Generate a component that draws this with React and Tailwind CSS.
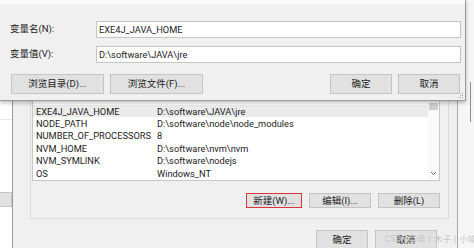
import React from "react";

const rows = [
  { name: "EXE4J_JAVA_HOME", value: "D:\\software\\JAVA\\jre" },
  { name: "NODE_PATH", value: "D:\\software\\node\\node_modules" },
  { name: "NUMBER_OF_PROCESSORS", value: "8" },
  { name: "NVM_HOME", value: "D:\\software\\nvm\\nvm" },
  { name: "NVM_SYMLINK", value: "D:\\software\\nodejs" },
  { name: "OS", value: "Windows_NT" },
];

const Btn = ({ children, className = "" }) => (
  <div
    className={
      "h-[15px] shrink-0 flex items-center justify-center bg-[#e1e1e1] border border-[#c4c4c4] text-[9.5px] leading-none " +
      className
    }
  >
    {children}
  </div>
);

const App = () => {
  return (
    <div className="relative w-[474px] h-[248px] overflow-hidden bg-white text-[#1b1b1b] font-['Roboto','Noto_Sans_CJK_SC',sans-serif]">
      <div className="flex h-full">
        {/* sliver of the window behind, on the left */}
        <div className="w-[13px] shrink-0 bg-white border-r border-[#9c9c9c] flex flex-col overflow-hidden">
          <div className="h-[120px] shrink-0 border-b border-[#e8e8e8]" />
          <Btn className="mt-[72px] -ml-[40px] w-[52px]">确定</Btn>
        </div>

        {/* environment variables window */}
        <div className="w-[445px] shrink-0 bg-[#f0f0f0] border-r border-[#a8a8a8] flex flex-col pl-[17px] pr-[20px]">
          <div className="w-[419px] h-[219px] shrink-0 border border-[#dadada] flex flex-col">
            <div className="ml-[1px] w-[408px] h-[180px] shrink-0 bg-white border border-[#c8c8c8] flex">
              <div className="flex-1 flex flex-col pt-[103px] text-[9.25px] leading-none">
                {rows.map((row, i) => (
                  <div
                    key={row.name}
                    className={"h-[12.4px] flex items-center pl-[3px] " + (i === 0 ? "bg-[#ebebeb]" : "")}
                  >
                    <span className="w-[121px] shrink-0">{row.name}</span>
                    <span>{row.value}</span>
                  </div>
                ))}
              </div>
              <div className="w-[11px] shrink-0 bg-[#fafafa] flex flex-col">
                <div className="mt-[101px] mx-[1px] h-[7px] bg-[#cdcdcd]" />
                <div className="flex-1" />
                <svg width="11" height="10" viewBox="0 0 11 10" className="mb-[2px]">
                  <polyline points="3,4 5.5,6.5 8,4" fill="none" stroke="#606060" strokeWidth="1" />
                </svg>
              </div>
            </div>
            <div className="mt-[12px] flex justify-end gap-[7px] pr-[8px]">
              <Btn className="w-[56px] !border-[#d8343c]">新建(W)...</Btn>
              <Btn className="w-[62px]">编辑(I)...</Btn>
              <Btn className="w-[62px]">删除(L)</Btn>
            </div>
          </div>
          <div className="mt-[11px] flex justify-end gap-[7px]">
            <Btn className="w-[52px] h-[20px]">确定</Btn>
            <Btn className="w-[62px] h-[20px]">取消</Btn>
          </div>
        </div>

        {/* sliver on the right */}
        <div className="flex-1 bg-[#f6f6f6] flex justify-end pr-[3px]">
          <div className="w-[1px] h-[40px] mt-[82px] bg-[#8c8c8c]" />
        </div>
      </div>

      {/* edit dialog on top */}
      <div className="absolute left-0 top-0 w-[466px] h-[101px] bg-[#f0f0f0] border-r border-b border-[#9a9a9a] shadow-[0_2px_4px_rgba(0,0,0,0.25)] flex flex-col">
        <div className="h-[4px] shrink-0 bg-[#fbfbfb]" />
        <div className="mt-[17px] flex items-center pl-[10px] pr-[4px]">
          <span className="w-[86px] shrink-0 text-[9.5px]">变量名(N):</span>
          <div className="flex-1 h-[17px] bg-white border border-[#c4c4c4] flex items-center pl-[2px] text-[9.25px]">
            EXE4J_JAVA_HOME
          </div>
        </div>
        <div className="mt-[8px] flex items-center pl-[10px] pr-[4px]">
          <span className="w-[86px] shrink-0 text-[9.5px]">变量值(V):</span>
          <div className="flex-1 h-[17px] bg-white border border-[#c4c4c4] flex items-center pl-[2px] text-[9.25px]">
            D:\software\JAVA\jre
          </div>
        </div>
        <div className="mt-[11px] flex pl-[11px] pr-[5px] gap-[6px]">
          <Btn className="w-[93px] h-[20px]">浏览目录(D)...</Btn>
          <Btn className="w-[93px] h-[20px]">浏览文件(F)...</Btn>
          <div className="flex-1" />
          <Btn className="w-[62px] h-[20px]">确定</Btn>
          <Btn className="w-[62px] h-[20px]">取消</Btn>
        </div>
        <svg width="6" height="6" viewBox="0 0 6 6" className="absolute right-[1px] bottom-[1px]">
          <rect x="4" y="0" width="1" height="1" fill="#a0a0a0" />
          <rect x="2" y="2" width="1" height="1" fill="#a0a0a0" />
          <rect x="4" y="2" width="1" height="1" fill="#a0a0a0" />
          <rect x="0" y="4" width="1" height="1" fill="#a0a0a0" />
          <rect x="2" y="4" width="1" height="1" fill="#a0a0a0" />
          <rect x="4" y="4" width="1" height="1" fill="#a0a0a0" />
        </svg>
      </div>

      {/* watermark */}
      <div className="absolute left-[385px] top-[235px] text-[8.5px] leading-none text-[#c6c6c6] whitespace-nowrap">
        CSDN @男丨木子丨小喵
      </div>
    </div>
  );
};

export default App;
